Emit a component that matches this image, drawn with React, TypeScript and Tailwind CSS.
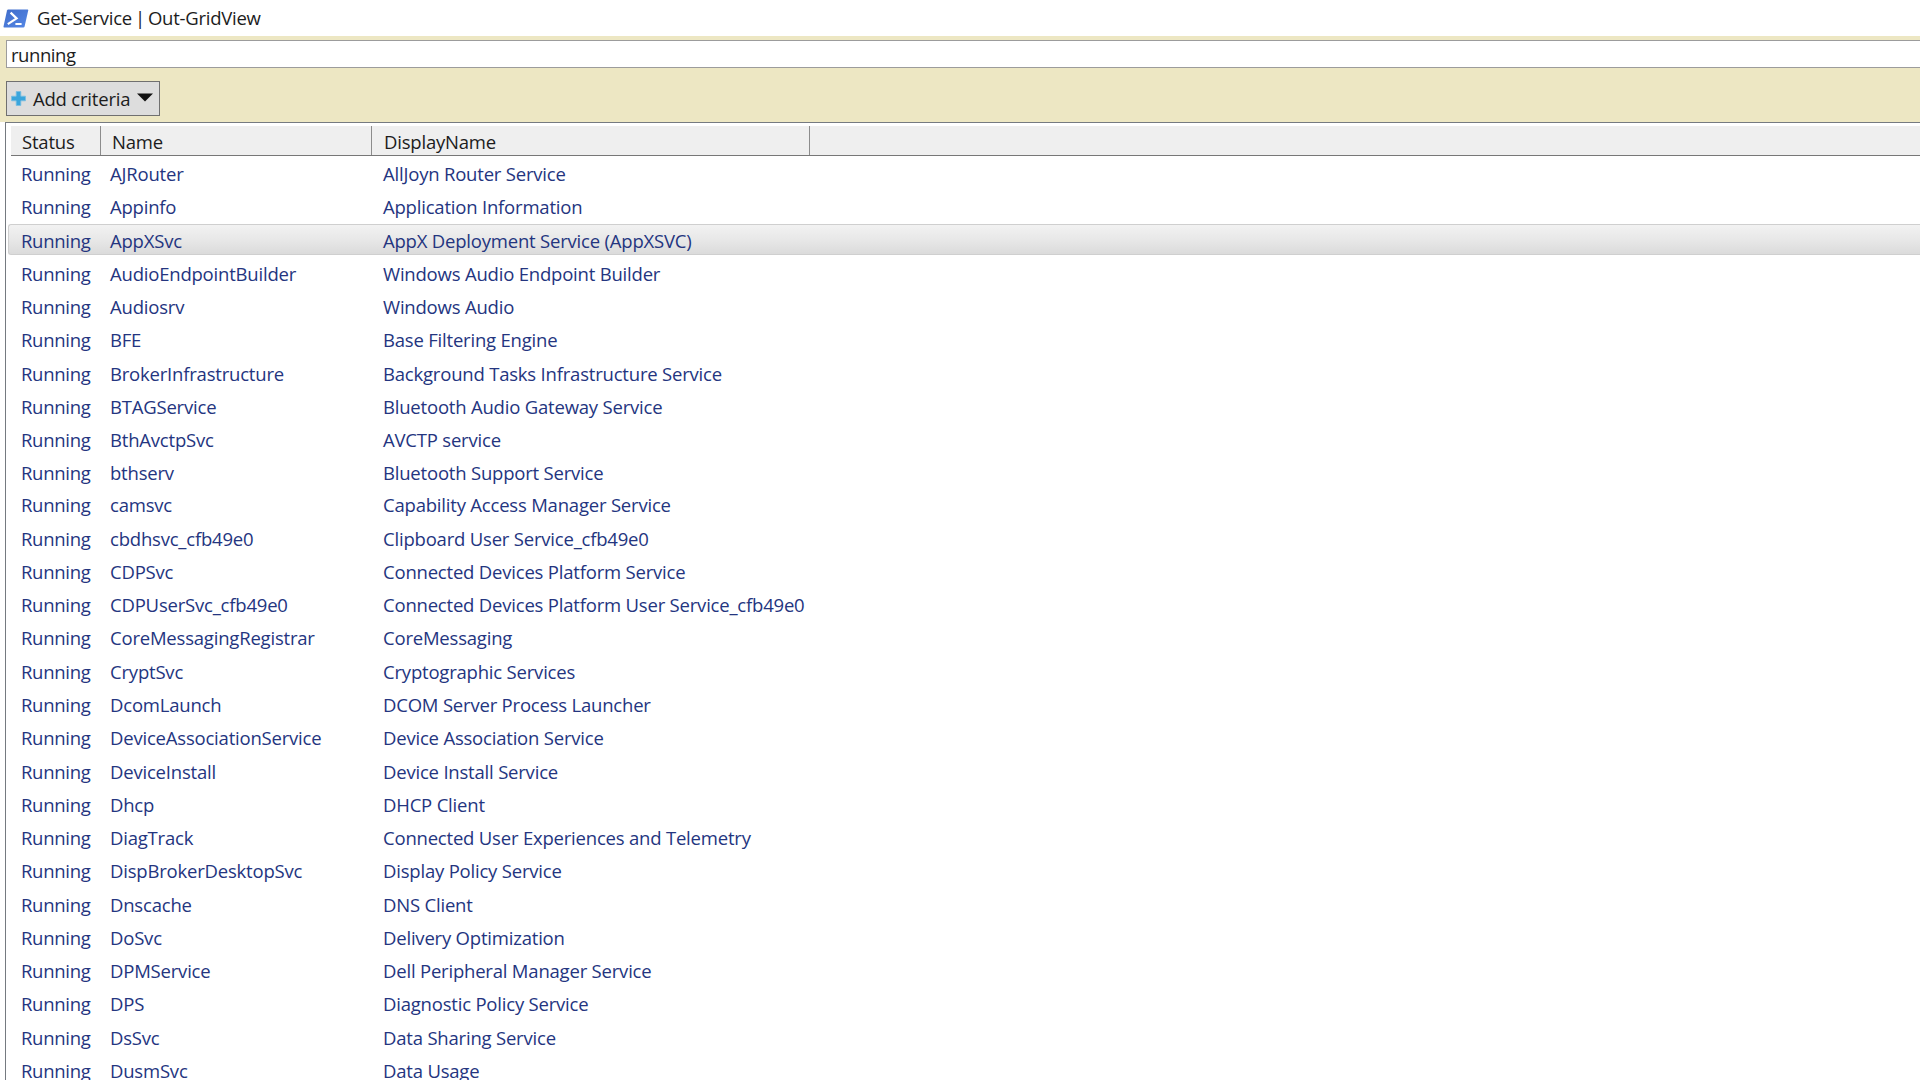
import React, { useState } from 'react';

interface Service {
  name: string;
  displayName: string;
}

const SERVICES: Service[] = [
  { name: 'AJRouter', displayName: 'AllJoyn Router Service' },
  { name: 'Appinfo', displayName: 'Application Information' },
  { name: 'AppXSvc', displayName: 'AppX Deployment Service (AppXSVC)' },
  { name: 'AudioEndpointBuilder', displayName: 'Windows Audio Endpoint Builder' },
  { name: 'Audiosrv', displayName: 'Windows Audio' },
  { name: 'BFE', displayName: 'Base Filtering Engine' },
  { name: 'BrokerInfrastructure', displayName: 'Background Tasks Infrastructure Service' },
  { name: 'BTAGService', displayName: 'Bluetooth Audio Gateway Service' },
  { name: 'BthAvctpSvc', displayName: 'AVCTP service' },
  { name: 'bthserv', displayName: 'Bluetooth Support Service' },
  { name: 'camsvc', displayName: 'Capability Access Manager Service' },
  { name: 'cbdhsvc_cfb49e0', displayName: 'Clipboard User Service_cfb49e0' },
  { name: 'CDPSvc', displayName: 'Connected Devices Platform Service' },
  { name: 'CDPUserSvc_cfb49e0', displayName: 'Connected Devices Platform User Service_cfb49e0' },
  { name: 'CoreMessagingRegistrar', displayName: 'CoreMessaging' },
  { name: 'CryptSvc', displayName: 'Cryptographic Services' },
  { name: 'DcomLaunch', displayName: 'DCOM Server Process Launcher' },
  { name: 'DeviceAssociationService', displayName: 'Device Association Service' },
  { name: 'DeviceInstall', displayName: 'Device Install Service' },
  { name: 'Dhcp', displayName: 'DHCP Client' },
  { name: 'DiagTrack', displayName: 'Connected User Experiences and Telemetry' },
  { name: 'DispBrokerDesktopSvc', displayName: 'Display Policy Service' },
  { name: 'Dnscache', displayName: 'DNS Client' },
  { name: 'DoSvc', displayName: 'Delivery Optimization' },
  { name: 'DPMService', displayName: 'Dell Peripheral Manager Service' },
  { name: 'DPS', displayName: 'Diagnostic Policy Service' },
  { name: 'DsSvc', displayName: 'Data Sharing Service' },
  { name: 'DusmSvc', displayName: 'Data Usage' },
];

function PowerShellIcon() {
  return (
    <svg className="w-[26px] h-[19px] shrink-0" viewBox="0 0 26 19">
      <defs>
        <linearGradient id="ps" x1="0" y1="0" x2="1" y2="1">
          <stop offset="0" stopColor="#3f6bc9" />
          <stop offset="1" stopColor="#5588e6" />
        </linearGradient>
      </defs>
      <path d="M5.2 0.5H24.6Q25.4 0.5 25.2 1.4L21.6 17.4Q21.3 18.5 20.3 18.5H1.2Q0.3 18.5 0.5 17.5L4 1.6Q4.3 0.5 5.2 0.5Z" fill="url(#ps)" />
      <path d="M7.6 3.6L13.6 9.4L4.8 15.2" fill="none" stroke="#fff" strokeWidth="2.2" />
      <path d="M12.4 15H18.6" stroke="#fff" strokeWidth="2" />
    </svg>
  );
}

function PlusIcon() {
  return (
    <svg className="w-[15px] h-[15px] shrink-0" viewBox="0 0 15 15">
      <path d="M5.2 0.5H9.8V5.2H14.5V9.8H9.8V14.5H5.2V9.8H0.5V5.2H5.2Z" fill="#3aa5dc" stroke="#78bfe2" strokeWidth="0.8" />
    </svg>
  );
}

export default function App() {
  const [filter, setFilter] = useState('running');
  const [selected, setSelected] = useState('AppXSvc');

  return (
    <div className="w-full h-screen overflow-hidden flex flex-col bg-white font-['Open_Sans',sans-serif] text-[18.5px] tracking-[-0.2px] text-[#1c1c1c] whitespace-nowrap">
      {/* Title bar */}
      <div className="h-9 shrink-0 flex items-center gap-2 pl-[3px]">
        <PowerShellIcon />
        <span className="leading-9 tracking-[-0.25px] [word-spacing:-1.5px]">Get-Service | Out-GridView</span>
      </div>

      {/* Filter panel */}
      <div className="h-[86px] shrink-0 bg-[#ede7c3] pt-1 pl-1.5">
        <input
          type="text"
          value={filter}
          onChange={(e) => setFilter(e.target.value)}
          className="block w-full h-7 bg-white border border-r-0 border-[#9c9c9c] pl-1 pt-px tracking-[-0.45px] outline-none"
        />
        <button className="mt-[13px] w-[154px] h-[35px] flex items-center bg-[#dddddd] border border-[#707070] pl-1">
          <PlusIcon />
          <span className="ml-[7px] w-[97px] pt-px text-left tracking-[-0.2px]">Add criteria</span>
          <svg className="ml-[7px] mb-0.5 w-4 h-[9px] shrink-0" viewBox="0 0 16 9">
            <path d="M0 0.5H16L8 8.5Z" fill="#111" />
          </svg>
        </button>
      </div>

      {/* Result grid */}
      <div className="flex-1 min-h-0 ml-[5px] border-t border-l border-[#757a80] pt-[3px]">
        <div className="ml-[5px] h-[30px] flex bg-[#efefef] border-b border-[#777777] leading-[31px]">
          <div className="w-[90px] pl-[11px] border-r border-[#8c8c8c]">Status</div>
          <div className="w-[271px] pl-[11px] border-r border-[#8c8c8c]">Name</div>
          <div className="w-[438px] pl-3 border-r border-[#8c8c8c]">DisplayName</div>
        </div>
        <div className="ml-0.5 pt-px text-[#24357f]">
          {SERVICES.map((service) => (
            <div
              key={service.name}
              onClick={() => setSelected(service.name)}
              className={`h-[31.3px] mb-[1.98px] nth-[10]:mb-[0.7px] flex leading-[31px] rounded-l-[3px] border border-r-0 ${
                selected === service.name
                  ? 'border-[#cfcfcf] bg-linear-to-b from-[#f2f2f2] via-[#e8e8e8] to-[#dbdbdb]'
                  : 'border-transparent'
              }`}
            >
              <div className="w-[89px] pl-3 tracking-[-0.3px]">Running</div>
              <div className="w-[274px] pl-3">{service.name}</div>
              <div className="pl-[11px]">{service.displayName}</div>
            </div>
          ))}
        </div>
      </div>
    </div>
  );
}
